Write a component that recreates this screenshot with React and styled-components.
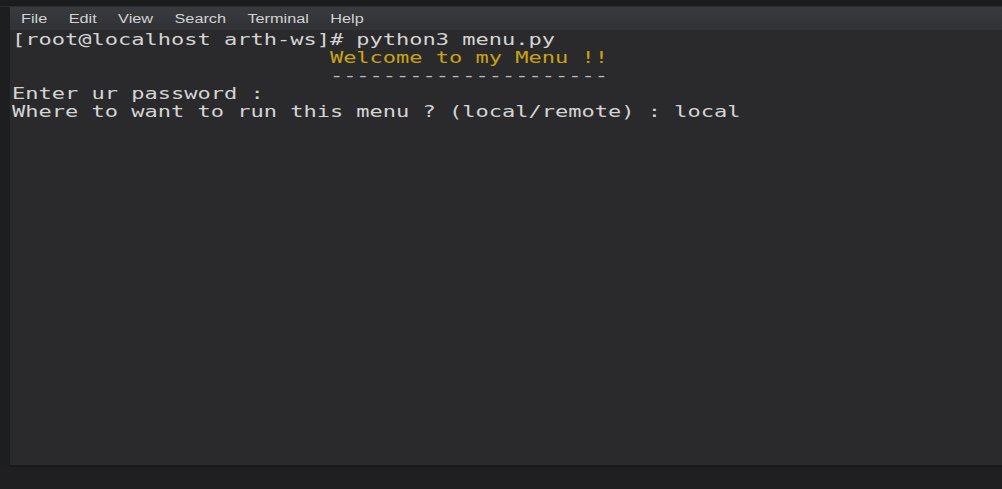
import React from 'react';
import styled, { createGlobalStyle } from 'styled-components';

const menus = ['File', 'Edit', 'View', 'Search', 'Terminal', 'Help'];

const lines = [
  { text: '[root@localhost arth-ws]# python3 menu.py' },
  { text: '                        Welcome to my Menu !!', tone: 'yellow' },
  { text: '                        ---------------------', tone: 'dim' },
  { text: 'Enter ur password :' },
  { text: 'Where to want to run this menu ? (local/remote) : local' },
];

export default function App() {
  return (
    <>
      <Global />
      <Screen>
        <TopStrip />
        <Middle>
          <Gutter />
          <Window>
            <MenuBar>
              <MenuList>
                {menus.map((m) => (
                  <MenuItem key={m}>{m}</MenuItem>
                ))}
              </MenuList>
            </MenuBar>
            <Terminal>
              <Output>
                {lines.map((l, i) => (
                  <Line key={i} $tone={l.tone}>{l.text}</Line>
                ))}
              </Output>
            </Terminal>
          </Window>
        </Middle>
        <BottomStrip />
      </Screen>
    </>
  );
}

const Global = createGlobalStyle`
  html, body {
    margin: 0;
    padding: 0;
    background: #1e1e20;
    overflow: hidden;
  }
`;

const Screen = styled.div`
  width: 1002px;
  height: 489px;
  display: flex;
  flex-direction: column;
  background: #1e1e20;
  overflow: hidden;
`;

const TopStrip = styled.div`
  height: 6px;
  background: #1b1c1e;
  border-bottom: 1px solid #2a2c2f;
`;

const Middle = styled.div`
  display: flex;
  height: 460px;
`;

const Gutter = styled.div`
  width: 10px;
  background: #1d1e20;
`;

const Window = styled.div`
  flex: 1;
  min-width: 0;
  display: flex;
  flex-direction: column;
  border-bottom: 2px solid #19191b;
`;

const MenuBar = styled.div`
  height: 23px;
  background: linear-gradient(#383a3d, #303235);
  display: flex;
  align-items: center;
  padding-left: 11px;
`;

const MenuList = styled.div`
  display: flex;
  gap: 16.5px;
  transform: scaleX(1.3);
  transform-origin: left center;
  font-family: 'Liberation Sans', Arial, sans-serif;
  font-size: 12.5px;
  color: #d2d2d2;
`;

const MenuItem = styled.span``;

const Terminal = styled.div`
  flex: 1;
  background: #2a2a2c;
  padding: 1px 0 0 2px;
  overflow: hidden;
`;

const Output = styled.div`
  width: max-content;
  transform: scaleX(1.375);
  transform-origin: left top;
  font-family: 'DejaVu Sans Mono', 'Liberation Mono', monospace;
  font-size: 16px;
  line-height: 18px;
  white-space: pre;
`;

const Line = styled.div`
  color: ${(p) =>
    p.$tone === 'yellow' ? '#c9a313' : p.$tone === 'dim' ? '#bdbdbd' : '#d4d4d4'};
`;

const BottomStrip = styled.div`
  flex: 1;
  background: #1f1e21;
`;
